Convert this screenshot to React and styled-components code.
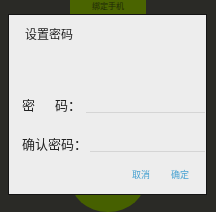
import styled, { createGlobalStyle } from 'styled-components'

const GlobalStyle = createGlobalStyle`
  html, body {
    margin: 0;
    padding: 0;
    background: #2a2a26;
  }
  body {
    width: 216px;
    height: 212px;
    overflow: hidden;
    font-family: "Noto Sans CJK SC", "Noto Sans", sans-serif;
  }
`

const Page = styled.div`
  width: 216px;
  height: 212px;
  display: flex;
  flex-direction: column;
  align-items: center;
  background: #2a2a26;
`

const BindButton = styled.div`
  width: 76px;
  height: 20px;
  background: #4a6400;
  color: #1e2a08;
  font-size: 8px;
  line-height: 11px;
  text-align: center;
`

const RoundButton = styled.div`
  margin-top: 127px;
  width: 76px;
  height: 76px;
  border-radius: 50%;
  background: #466000;
`

const Dialog = styled.div`
  position: fixed;
  left: 9px;
  top: 15px;
  width: 197px;
  height: 179px;
  box-sizing: border-box;
  background: #ededed;
  box-shadow: 0 0 0 1px #141414;
  padding: 12px 1px 0 13px;
  display: flex;
  flex-direction: column;
`

const Title = styled.div`
  padding-left: 3px;
  font-size: 12px;
  line-height: 14px;
  color: #222;
`

const Row = styled.div`
  display: flex;
  align-items: flex-end;
  margin-top: ${p => p.$top}px;
`

const Label = styled.div`
  font-size: 13px;
  line-height: 16px;
  color: #222;
  white-space: nowrap;
`

const Spacer = styled.span`
  display: inline-block;
  width: 20px;
`

const Field = styled.div`
  flex: 1;
  height: 16px;
  margin-left: ${p => p.$gap}px;
  border-bottom: 1px solid #d5d5d5;
`

const Actions = styled.div`
  display: flex;
  justify-content: flex-end;
  gap: 21px;
  margin-top: 17px;
  padding-right: 16px;
`

const Action = styled.div`
  font-size: 9px;
  line-height: 12px;
  color: #4aa3d2;
`

export default function App() {
  return (
    <>
      <GlobalStyle />
      <Page>
        <BindButton>绑定手机</BindButton>
        <RoundButton />
      </Page>
      <Dialog>
        <Title>设置密码</Title>
        <Row $top={55}>
          <Label>密<Spacer />码：</Label>
          <Field $gap={5} />
        </Row>
        <Row $top={22}>
          <Label>确认密码：</Label>
          <Field $gap={3} />
        </Row>
        <Actions>
          <Action>取消</Action>
          <Action>确定</Action>
        </Actions>
      </Dialog>
    </>
  )
}
